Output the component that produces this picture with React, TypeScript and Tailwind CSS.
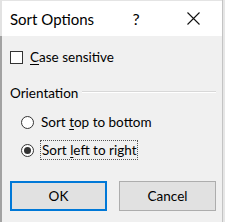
import React from "react";

const font = { fontFamily: "Lato, 'Noto Sans', 'Liberation Sans', sans-serif" };

function Radio({ checked }: { checked?: boolean }) {
  return (
    <span className="w-[13px] h-[13px] rounded-full border border-[#333333] bg-white flex items-center justify-center shrink-0">
      {checked && <span className="w-[7px] h-[7px] rounded-full bg-[#333333]" />}
    </span>
  );
}

export default function App() {
  return (
    <div
      className="w-[225px] h-[222px] flex bg-[#f0f0f0] text-black overflow-hidden"
      style={font}
    >
      <div className="w-[2px] flex flex-col">
        <div className="h-[36px] bg-[#e2e2e2]" />
        <div className="flex-1 bg-[#a2a2a2]" />
      </div>
      <div className="w-[220px] flex flex-col">
        <div className="h-[36px] bg-white flex items-center border-t border-[#e4e4e4]">
          <div className="w-[111px] pl-[8px] text-[15px] leading-[20px]">Sort Options</div>
          <div className="w-[46px] text-center text-[16px] leading-[20px]">?</div>
          <div className="ml-[11px] w-[46px] flex justify-center">
            <svg width="13" height="13" viewBox="0 0 13 13">
              <path d="M0.5 0.5 L12.5 12.5 M12.5 0.5 L0.5 12.5" stroke="#111" strokeWidth="1.1" fill="none" />
            </svg>
          </div>
        </div>
        <div className="flex flex-col pl-[8px] pr-[6px] text-[13.5px]">
          <div className="mt-[13px] h-[16px] flex items-center">
            <span className="w-[13px] h-[13px] border border-[#333333] bg-white shrink-0" />
            <span className="ml-[7px] leading-[16px]">
              <u className="underline-offset-2">C</u>ase sensitive
            </span>
          </div>
          <div className="mt-[20px] h-[16px] flex">
            <span className="leading-[16px]">Orientation</span>
            <div className="flex-1 ml-[4px] mt-[6px] h-[2px] border-t border-[#d8d8d8] border-b border-b-white" />
          </div>
          <div className="mt-[11px] h-[20px] flex items-center pl-[11px]">
            <Radio />
            <span className="ml-[7px] leading-[16px]">
              Sort <u className="underline-offset-2">t</u>op to bottom
            </span>
          </div>
          <div className="mt-[8px] h-[20px] flex items-center pl-[11px]">
            <Radio checked />
            <span className="ml-[6px] leading-[16px] px-[1px] py-[1px] border border-dotted border-[#555555]">
              Sort <u className="underline-offset-2">l</u>eft to right
            </span>
          </div>
          <div className="mt-[21px] flex gap-[12px]">
            <div className="w-[97px] h-[30px] bg-[#e1e1e1] border-2 border-[#0078d7] flex items-center justify-center">
              OK
            </div>
            <div className="w-[97px] h-[30px] bg-[#e1e1e1] border border-[#adadad] flex items-center justify-center">
              Cancel
            </div>
          </div>
        </div>
      </div>
      <div className="w-[3px] flex flex-col border-l border-[#c4c4c4] bg-[#e6e6e6]" />
    </div>
  );
}
